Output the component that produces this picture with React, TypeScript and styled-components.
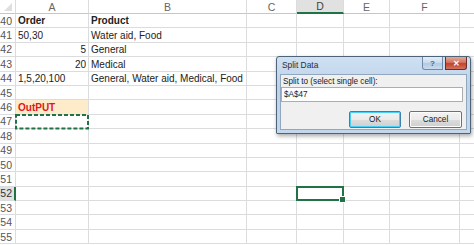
import React from 'react';
import styled, { createGlobalStyle, css } from 'styled-components';

const GlobalStyle = createGlobalStyle`
  html, body {
    margin: 0;
    padding: 0;
    background: #ffffff;
    overflow: hidden;
  }
  body {
    font-family: "Liberation Sans", Arial, sans-serif;
  }
`;

const GRID = '#dadcdd';
const GREEN = '#217346';
const ROW_H = 14.4;

const Sheet = styled.div`
  position: relative;
  width: 474px;
  height: 245px;
  overflow: hidden;
  background: #fff;
`;

const Row = styled.div<{ $h: number }>`
  display: flex;
  height: ${({ $h }) => $h}px;
`;

const Corner = styled.div`
  position: relative;
  width: 16px;
  flex: none;
  box-sizing: border-box;
  border-right: 1px solid ${GRID};
  border-bottom: 1px solid #c6c6c6;
  background: #fff;

  &::after {
    content: '';
    position: absolute;
    right: 3px;
    bottom: 2px;
    width: 0;
    height: 0;
    border-left: 8px solid transparent;
    border-bottom: 8px solid #dfdfdf;
  }
`;

const ColHead = styled.div<{ $w: number; $active?: boolean }>`
  width: ${({ $w }) => $w}px;
  flex: none;
  box-sizing: border-box;
  display: flex;
  align-items: center;
  justify-content: center;
  font-size: 10.5px;
  color: #666;
  border-right: 1px solid ${GRID};
  border-bottom: 1px solid #c6c6c6;
  background: #fff;
  ${({ $active }) =>
    $active &&
    css`
      background: #e1e1e1;
      color: #444;
      border-bottom: 2px solid ${GREEN};
    `}
`;

const RowHead = styled.div<{ $active?: boolean }>`
  width: 16px;
  flex: none;
  box-sizing: border-box;
  display: flex;
  align-items: center;
  justify-content: flex-end;
  padding-right: 3px;
  overflow: hidden;
  white-space: nowrap;
  font-size: 10.5px;
  color: #555;
  border-right: 1px solid ${GRID};
  border-bottom: 1px solid ${GRID};
  ${({ $active }) =>
    $active &&
    css`
      background: #e1e1e1;
      color: #333;
      border-right: 2px solid ${GREEN};
      padding-right: 2px;
    `}
`;

const Cell = styled.div<{
  $w: number;
  $right?: boolean;
  $bold?: boolean;
  $red?: boolean;
  $fill?: string;
}>`
  position: relative;
  width: ${({ $w }) => $w}px;
  flex: none;
  box-sizing: border-box;
  display: flex;
  align-items: flex-end;
  justify-content: ${({ $right }) => ($right ? 'flex-end' : 'flex-start')};
  padding: 0 2px 1px 2px;
  white-space: nowrap;
  font-size: 10px;
  color: ${({ $red }) => ($red ? '#e3161b' : '#222')};
  font-weight: ${({ $bold }) => ($bold ? 700 : 400)};
  background: ${({ $fill }) => $fill || 'transparent'};
  border-right: 1px solid ${GRID};
  border-bottom: 1px solid ${GRID};
`;

const Selected = styled.div`
  position: absolute;
  left: -1px;
  top: -1px;
  right: -1px;
  bottom: -1px;
  border: 2px solid ${GREEN};
  z-index: 2;

  &::after {
    content: '';
    position: absolute;
    right: -4px;
    bottom: -4px;
    width: 5px;
    height: 5px;
    background: ${GREEN};
    border: 1px solid #fff;
  }
`;

const Ants = styled.svg`
  position: absolute;
  left: -1px;
  top: -1px;
  width: calc(100% + 1px);
  height: calc(100% + 1px);
  overflow: visible;
  z-index: 2;
`;

/* ---------- dialog ---------- */

const Dialog = styled.div`
  position: absolute;
  left: 276px;
  top: 56px;
  width: 195px;
  height: 78px;
  box-sizing: border-box;
  border: 1px solid #4f6378;
  border-radius: 3px 3px 1px 1px;
  background: linear-gradient(#cfe0f2, #bcd2e9 40%, #c4d8ed);
  box-shadow: 1px 2px 4px rgba(0, 0, 0, 0.35);
  display: flex;
  flex-direction: column;
  z-index: 5;
  font-family: "Liberation Sans", Arial, sans-serif;
`;

const TitleBar = styled.div`
  height: 17px;
  display: flex;
  align-items: flex-start;
  padding: 0 3px 0 5px;
`;

const Title = styled.span`
  flex: 1;
  font-size: 8.4px;
  line-height: 16px;
  color: #1b2f45;
`;

const CapButton = styled.div<{ $close?: boolean }>`
  height: 13px;
  width: ${({ $close }) => ($close ? 22 : 21)}px;
  box-sizing: border-box;
  margin-left: 2px;
  display: flex;
  align-items: center;
  justify-content: center;
  border: 1px solid ${({ $close }) => ($close ? '#6b2d26' : '#6e8aa8')};
  border-top: none;
  border-radius: ${({ $close }) => ($close ? '0 0 3px 0' : '0 0 0 3px')};
  font-size: 8px;
  font-weight: 700;
  color: ${({ $close }) => ($close ? '#fff' : '#4b6480')};
  background: ${({ $close }) =>
    $close
      ? 'linear-gradient(#e6a999, #d2735f 45%, #c1432f 55%, #d1735c)'
      : 'linear-gradient(#e4eef8, #cbdcee 45%, #b4cae3 55%, #c9dbee)'};
`;

const Client = styled.div`
  flex: 1;
  margin: 0 3px 3px 3px;
  box-sizing: border-box;
  border: 1px solid #90a7bf;
  background: #f0f0f0;
  padding: 1px 3px 1px 0;
  display: flex;
  flex-direction: column;
`;

const Label = styled.div`
  height: 11px;
  font-size: 8.2px;
  line-height: 11px;
  color: #1a1a1a;
  padding-left: 2px;
`;

const Input = styled.div`
  height: 15px;
  box-sizing: border-box;
  border: 1px solid #abadb3;
  background: #fff;
  font-size: 8.2px;
  line-height: 13px;
  padding-left: 2px;
  color: #222;
`;

const ButtonRow = styled.div`
  margin-top: 9px;
  display: flex;
  justify-content: flex-end;
  gap: 8px;
  padding-right: 1px;
`;

const Button = styled.div<{ $default?: boolean }>`
  width: ${({ $default }) => ($default ? 52 : 53)}px;
  height: 17px;
  box-sizing: border-box;
  border-radius: 2px;
  border: 1px solid ${({ $default }) => ($default ? '#3c7fb1' : '#707070')};
  box-shadow: ${({ $default }) => ($default ? 'inset 0 0 0 1px #48d0fa' : 'inset 0 0 0 1px #fcfcfc')};
  background: linear-gradient(#f3f3f3, #ebebeb 50%, #dddddd 50%, #cfcfcf);
  display: flex;
  align-items: center;
  justify-content: center;
  font-size: 8.2px;
  color: #1a1a1a;
`;

type CellData = {
  text?: string;
  right?: boolean;
  bold?: boolean;
  red?: boolean;
  fill?: string;
  ants?: boolean;
  selected?: boolean;
};

const columns = [
  { key: 'A', w: 73 },
  { key: 'B', w: 158 },
  { key: 'C', w: 50 },
  { key: 'D', w: 47 },
  { key: 'E', w: 46 },
  { key: 'F', w: 70 },
  { key: 'G', w: 90 },
];

const rows: { n: number; cells: Record<string, CellData> }[] = [
  { n: 40, cells: { A: { text: 'Order', bold: true }, B: { text: 'Product', bold: true } } },
  { n: 41, cells: { A: { text: '50,30' }, B: { text: 'Water aid, Food' } } },
  { n: 42, cells: { A: { text: '5', right: true }, B: { text: 'General' } } },
  { n: 43, cells: { A: { text: '20', right: true }, B: { text: 'Medical' } } },
  { n: 44, cells: { A: { text: '1,5,20,100' }, B: { text: 'General, Water aid, Medical, Food' } } },
  { n: 45, cells: {} },
  { n: 46, cells: { A: { text: 'OutPUT', bold: true, red: true, fill: '#fdebc9' } } },
  { n: 47, cells: { A: { ants: true } } },
  { n: 48, cells: {} },
  { n: 49, cells: {} },
  { n: 50, cells: {} },
  { n: 51, cells: {} },
  { n: 52, cells: { D: { selected: true } } },
  { n: 53, cells: {} },
  { n: 54, cells: {} },
  { n: 55, cells: {} },
];

function MarchingAnts() {
  return (
    <Ants preserveAspectRatio="none">
      <rect
        x="1"
        y="1"
        width="calc(100% - 1px)"
        height="calc(100% - 1px)"
        fill="none"
        stroke={GREEN}
        strokeWidth="2"
        strokeDasharray="4 2"
      />
    </Ants>
  );
}

export default function App() {
  return (
    <>
      <GlobalStyle />
      <Sheet>
        <Row $h={14}>
          <Corner />
          {columns.map((c) => (
            <ColHead key={c.key} $w={c.w} $active={c.key === 'D'}>
              {c.key === 'G' ? '' : c.key}
            </ColHead>
          ))}
        </Row>
        {rows.map((r) => (
          <Row key={r.n} $h={ROW_H}>
            <RowHead $active={r.n === 52}>{r.n}</RowHead>
            {columns.map((c) => {
              const d = r.cells[c.key] || {};
              return (
                <Cell
                  key={c.key}
                  $w={c.w}
                  $right={d.right}
                  $bold={d.bold}
                  $red={d.red}
                  $fill={d.fill}
                >
                  {d.text}
                  {d.ants && <MarchingAnts />}
                  {d.selected && <Selected />}
                </Cell>
              );
            })}
          </Row>
        ))}

        <Dialog>
          <TitleBar>
            <Title>Split Data</Title>
            <CapButton>?</CapButton>
            <CapButton $close>✕</CapButton>
          </TitleBar>
          <Client>
            <Label>Split to (select single cell):</Label>
            <Input>$A$47</Input>
            <ButtonRow>
              <Button $default>OK</Button>
              <Button>Cancel</Button>
            </ButtonRow>
          </Client>
        </Dialog>
      </Sheet>
    </>
  );
}
